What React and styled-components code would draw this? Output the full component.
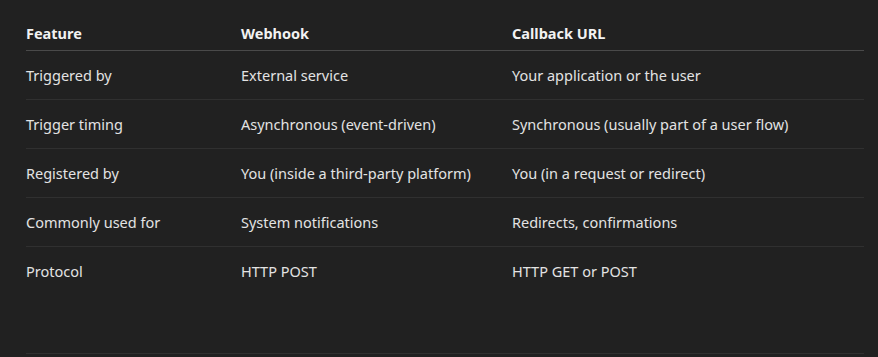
import React from "react";
import styled, { createGlobalStyle } from "styled-components";

const rows = [
	["Triggered by", "External service", "Your application or the user"],
	["Trigger timing", "Asynchronous (event-driven)", "Synchronous (usually part of a user flow)"],
	["Registered by", "You (inside a third-party platform)", "You (in a request or redirect)"],
	["Commonly used for", "System notifications", "Redirects, confirmations"],
	["Protocol", "HTTP POST", "HTTP GET or POST"]
];

const GlobalStyle = createGlobalStyle`
	html, body {
		margin: 0;
		background: #212121;
	}
	body {
		font-family: "Noto Sans", "Open Sans", sans-serif;
	}
`;

const Page = styled.div`
	width: 878px;
	height: 357px;
	box-sizing: border-box;
	padding: 15px 14px 0 26px;
	background: #212121;
	overflow: hidden;
`;

const Table = styled.div`
	display: grid;
	grid-template-columns: 215px 271px 1fr;
`;

const Row = styled.div`
	display: contents;
`;

const Cell = styled.div`
	padding: ${props => (props.head ? "8px 0 7px" : "14px 0")};
	line-height: 20px;
	font-size: 14.5px;
	font-weight: ${props => (props.head ? 700 : 400)};
	color: ${props => (props.head ? "#f2f2f2" : "#e3e3e3")};
	border-bottom: 1px solid ${props => (props.head ? "#4a4a4a" : "#303030")};
	white-space: nowrap;
	${props => props.last && "border-bottom: none;"}
`;

const Rule = styled.div`
	margin-top: 58px;
	height: 1px;
	background: #303030;
`;

export default () => {
	return (
		<Page>
			<GlobalStyle />
			<Table>
				<Row>
					<Cell head>Feature</Cell>
					<Cell head>Webhook</Cell>
					<Cell head>Callback URL</Cell>
				</Row>
				{rows.map((r, i) => (
					<Row key={r[0]}>
						{r.map(text => (
							<Cell key={text} last={i === rows.length - 1}>
								{text}
							</Cell>
						))}
					</Row>
				))}
			</Table>
			<Rule />
		</Page>
	);
};
